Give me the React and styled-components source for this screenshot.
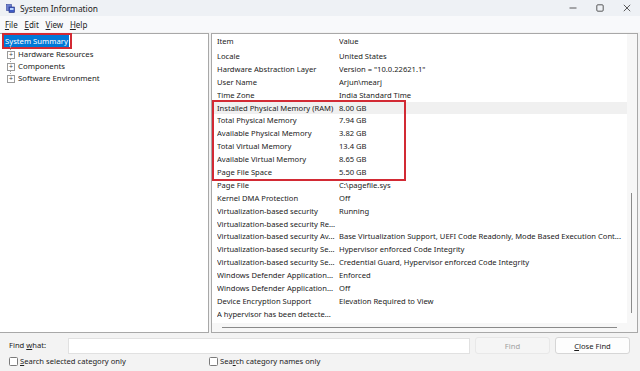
import styled, { createGlobalStyle } from "styled-components";

const GlobalStyle = createGlobalStyle`
  html, body {
    margin: 0;
    padding: 0;
    background: #f3f3f3;
  }
  body {
    font-family: "Noto Sans", "Open Sans", sans-serif;
    font-size: 7.6px;
    color: #1a1a1a;
  }
`;

const Window = styled.div`
  width: 640px;
  height: 371px;
  display: flex;
  flex-direction: column;
  background: #f3f3f3;
  overflow: hidden;
`;

const TitleBar = styled.div`
  height: 16px;
  display: flex;
  align-items: center;
  background: #eef1f5;
  padding-left: 6px;
`;

const AppTitle = styled.span`
  margin-left: 5px;
  font-size: 8.4px;
  color: #222;
`;

const Controls = styled.div`
  margin-left: auto;
  display: flex;
  height: 100%;
`;

const ControlButton = styled.div`
  width: 27px;
  height: 100%;
  display: flex;
  align-items: center;
  justify-content: center;
  color: #333;
`;

const MenuBar = styled.div`
  height: 16px;
  display: flex;
  align-items: center;
  background: #f8f9fb;
  padding-left: 1.5px;
  font-size: 8px;
`;

const MenuItem = styled.span`
  padding: 0 3.4px;
  color: #222;
  u {
    text-decoration-thickness: 0.6px;
    text-underline-offset: 1px;
  }
`;

const Panes = styled.div`
  height: 300px;
  display: flex;
  gap: 2px;
  padding: 0 2px 0 0;
  margin-top: 1px;
`;

const TreePane = styled.div`
  width: 209px;
  background: #fff;
  border: 1px solid #a8a8a8;
  border-left: none;
  padding: 0 0 0 4px;
  box-sizing: border-box;
`;

const TreeRoot = styled.div`
  position: relative;
  display: inline-block;
  margin-top: 1px;
  padding: 0 1px 0 1px;
  height: 12px;
  line-height: 12px;
  font-size: 7.7px;
  background: #0078d7;
  color: #fff;

  &::after {
    content: "";
    position: absolute;
    inset: -2px -3px -2px -2px;
    border: 2px solid #d22a34;
  }
`;

const TreeList = styled.div`
  position: relative;
  margin-top: 1px;
  padding-left: 14px;

  &::before {
    content: "";
    position: absolute;
    left: 6px;
    top: -2px;
    height: 36px;
    border-left: 1px dotted #a0a0a0;
  }
`;

const TreeItem = styled.div`
  position: relative;
  height: 12px;
  line-height: 12px;
  font-size: 7.8px;
  color: #222;
`;

const Expander = styled.span`
  position: absolute;
  left: -11px;
  top: 2.5px;
  width: 6px;
  height: 6px;
  border: 1px solid #9a9a9a;
  background: #fff;
  display: flex;
  align-items: center;
  justify-content: center;
  font-size: 7px;
  line-height: 6px;
  color: #444;
`;

const ListPane = styled.div`
  flex: 1;
  background: #fff;
  border: 1px solid #a8a8a8;
  display: grid;
  grid-template-columns: 1fr 10px;
  grid-template-rows: 1fr 9px;
  overflow: hidden;
`;

const ListBody = styled.div`
  padding-top: 1px;
  overflow: hidden;
  white-space: nowrap;
`;

const Row = styled.div`
  display: grid;
  grid-template-columns: 122px 1fr;
  height: ${(p) => (p.$header ? "15px" : "12.9px")};
  line-height: ${(p) => (p.$header ? "13px" : "12.9px")};
  padding-left: 5px;
  background: ${(p) => (p.$hover ? "#f0f0f0" : "transparent")};
  color: #1b1b1b;
  span {
    overflow: hidden;
  }
`;

const Marked = styled.div`
  position: relative;
  &::after {
    content: "";
    position: absolute;
    left: 0;
    top: -2px;
    width: 190px;
    bottom: -2px;
    border: 2px solid #d22a34;
    pointer-events: none;
  }
`;

const VScroll = styled.div`
  background: #f7f7f7;
  position: relative;
  &::after {
    content: "";
    position: absolute;
    left: 4px;
    top: 159px;
    height: 120px;
    border-left: 1.5px solid #8a8a8a;
  }
`;

const HScroll = styled.div`
  position: relative;
  background: #f7f7f7;
  &::after {
    content: "";
    position: absolute;
    left: 10px;
    right: 10px;
    top: 4px;
    border-top: 1.5px solid #8a8a8a;
  }
`;

const Corner = styled.div`
  background: #f7f7f7;
`;

const FindBar = styled.div`
  flex: 1;
  display: flex;
  flex-direction: column;
  padding: 4px 0 0 9px;
  gap: 1px;
`;

const FindRow = styled.div`
  display: flex;
  align-items: center;
  height: 17px;
`;

const Label = styled.span`
  width: 59px;
  margin-top: -1px;
  color: #222;
`;

const Input = styled.div`
  width: 402px;
  height: 16px;
  background: #fff;
  border: 1px solid #e1e1e1;
  box-sizing: border-box;
`;

const Button = styled.div`
  width: 75px;
  height: 17px;
  margin-left: ${(p) => p.$gap}px;
  box-sizing: border-box;
  border: 1px solid ${(p) => (p.$disabled ? "#e8e8e8" : "#d6d6d6")};
  border-radius: 3px;
  background: ${(p) => (p.$disabled ? "#f5f5f5" : "#fdfdfd")};
  color: ${(p) => (p.$disabled ? "#a0a0a0" : "#1a1a1a")};
  display: flex;
  align-items: center;
  justify-content: center;
`;

const CheckRow = styled.div`
  display: flex;
  align-items: center;
  height: 12px;
`;

const Check = styled.label`
  display: flex;
  align-items: center;
  gap: 2px;
  width: ${(p) => p.$width}px;
  color: #222;
`;

const Box = styled.span`
  width: 7px;
  height: 7px;
  border: 1px solid #7a7a7a;
  border-radius: 1.5px;
  background: #fff;
`;

const AppIcon = () => (
  <svg width="9" height="9" viewBox="0 0 9 9">
    <rect x="0.5" y="0.5" width="5" height="6" fill="#6b7fd0" stroke="#36469a" strokeWidth="0.6" />
    <rect x="3" y="3" width="5.5" height="5.5" fill="#3f5bc4" stroke="#22307a" strokeWidth="0.6" />
    <rect x="4" y="4" width="3.5" height="2" fill="#b9d4ff" />
  </svg>
);

const rows = [
  ["Locale", "United States"],
  ["Hardware Abstraction Layer", 'Version = "10.0.22621.1"'],
  ["User Name", "Arjun\\mearj"],
  ["Time Zone", "India Standard Time"],
];

const memoryRows = [
  ["Installed Physical Memory (RAM)", "8.00 GB"],
  ["Total Physical Memory", "7.94 GB"],
  ["Available Physical Memory", "3.82 GB"],
  ["Total Virtual Memory", "13.4 GB"],
  ["Available Virtual Memory", "8.65 GB"],
  ["Page File Space", "5.50 GB"],
];

const moreRows = [
  ["Page File", "C:\\pagefile.sys"],
  ["Kernel DMA Protection", "Off"],
  ["Virtualization-based security", "Running"],
  ["Virtualization-based security Re...", ""],
  ["Virtualization-based security Av...", "Base Virtualization Support, UEFI Code Readonly, Mode Based Execution Cont..."],
  ["Virtualization-based security Se...", "Hypervisor enforced Code Integrity"],
  ["Virtualization-based security Se...", "Credential Guard, Hypervisor enforced Code Integrity"],
  ["Windows Defender Application...", "Enforced"],
  ["Windows Defender Application...", "Off"],
  ["Device Encryption Support", "Elevation Required to View"],
  ["A hypervisor has been detecte...", ""],
];

const renderRow = ([item, value], i, hover) => (
  <Row key={item + i} $hover={hover}>
    <span>{item}</span>
    <span>{value}</span>
  </Row>
);

export default function App() {
  return (
    <>
      <GlobalStyle />
      <Window>
        <TitleBar>
          <AppIcon />
          <AppTitle>System Information</AppTitle>
          <Controls>
            <ControlButton>
              <svg width="8" height="8" viewBox="0 0 8 8">
                <line x1="0.5" y1="4" x2="7.5" y2="4" stroke="#333" strokeWidth="0.8" />
              </svg>
            </ControlButton>
            <ControlButton>
              <svg width="8" height="8" viewBox="0 0 8 8">
                <rect x="0.8" y="0.8" width="6.4" height="6.4" rx="1" fill="none" stroke="#333" strokeWidth="0.8" />
              </svg>
            </ControlButton>
            <ControlButton>
              <svg width="8" height="8" viewBox="0 0 8 8">
                <path d="M0.8 0.8 L7.2 7.2 M7.2 0.8 L0.8 7.2" stroke="#333" strokeWidth="0.8" />
              </svg>
            </ControlButton>
          </Controls>
        </TitleBar>
        <MenuBar>
          <MenuItem><u>F</u>ile</MenuItem>
          <MenuItem><u>E</u>dit</MenuItem>
          <MenuItem><u>V</u>iew</MenuItem>
          <MenuItem><u>H</u>elp</MenuItem>
        </MenuBar>
        <Panes>
          <TreePane>
            <TreeRoot>System Summary</TreeRoot>
            <TreeList>
              {["Hardware Resources", "Components", "Software Environment"].map((t) => (
                <TreeItem key={t}>
                  <Expander>+</Expander>
                  {t}
                </TreeItem>
              ))}
            </TreeList>
          </TreePane>
          <ListPane>
            <ListBody>
              <Row $header>
                <span>Item</span>
                <span>Value</span>
              </Row>
              {rows.map((r, i) => renderRow(r, i))}
              <Marked>{memoryRows.map((r, i) => renderRow(r, i, i === 0))}</Marked>
              {moreRows.map((r, i) => renderRow(r, i))}
            </ListBody>
            <VScroll />
            <HScroll />
            <Corner />
          </ListPane>
        </Panes>
        <FindBar>
          <FindRow>
            <Label>Find <u>w</u>hat:</Label>
            <Input />
            <Button $disabled $gap={5}>Find</Button>
            <Button $gap={5}><span><u>C</u>lose Find</span></Button>
          </FindRow>
          <CheckRow>
            <Check $width={200}>
              <Box />
              <span><u>S</u>earch selected category only</span>
            </Check>
            <Check $width={140}>
              <Box />
              <span>Sea<u>r</u>ch category names only</span>
            </Check>
          </CheckRow>
        </FindBar>
      </Window>
    </>
  );
}
